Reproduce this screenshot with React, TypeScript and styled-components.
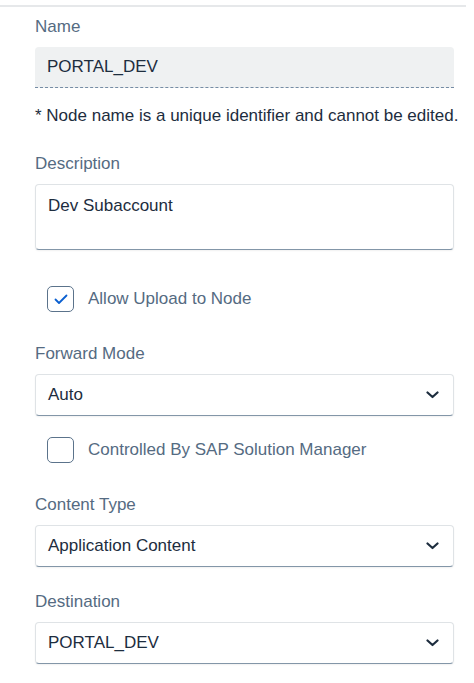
import React from 'react'
import styled, { createGlobalStyle } from 'styled-components'

const GlobalStyle = createGlobalStyle`
  html, body {
    margin: 0;
    padding: 0;
    background: #fff;
  }
  body {
    font-family: "Liberation Sans", Arial, sans-serif;
    font-size: 17px;
  }
`

const Page = styled.div`
  width: 474px;
  min-height: 683px;
  background: #fff;
  overflow: hidden;
`

const TopRule = styled.div`
  margin-top: 5px;
  width: 466px;
  height: 2px;
  background: #e6e8ea;
`

const Form = styled.div`
  display: flex;
  flex-direction: column;
  padding-left: 35px;
  width: 419px;
`

const Label = styled.div<{ $top: number }>`
  margin-top: ${(p) => p.$top}px;
  margin-bottom: 10px;
  line-height: 20px;
  color: #556b82;
`

const ReadOnly = styled.div`
  height: 40px;
  display: flex;
  align-items: center;
  padding: 0 12px;
  background: #eff1f2;
  border-radius: 4px 4px 0 0;
  border-bottom: 1px dashed #758ca4;
  color: #1d2d3e;
`

const Note = styled.div`
  margin-top: 18px;
  line-height: 20px;
  color: #1d2d3e;
  white-space: nowrap;
`

const TextArea = styled.div`
  box-sizing: border-box;
  height: 66px;
  padding: 11px 12px;
  line-height: 20px;
  border: 1px solid #dfe3e6;
  border-bottom-color: #8396a8;
  border-radius: 4px;
  box-shadow: 0 1px 2px rgba(0, 0, 0, 0.06);
  color: #1d2d3e;
`

const CheckRow = styled.label<{ $top: number }>`
  display: flex;
  align-items: center;
  gap: 14px;
  margin-top: ${(p) => p.$top}px;
  padding-left: 12px;
  color: #556b82;
  line-height: 20px;
`

const Box = styled.span`
  box-sizing: border-box;
  width: 27px;
  height: 26px;
  display: flex;
  align-items: center;
  justify-content: center;
  border: 1px solid #5b738b;
  border-radius: 5px;
  background: #fff;
`

const Select = styled.div`
  box-sizing: border-box;
  height: 42px;
  display: flex;
  align-items: center;
  justify-content: space-between;
  padding: 0 14px 0 12px;
  border: 1px solid #dfe3e6;
  border-bottom-color: #8396a8;
  border-radius: 4px;
  box-shadow: 0 1px 2px rgba(0, 0, 0, 0.06);
  color: #1d2d3e;
`

const Chevron = () => (
  <svg width="13" height="8" viewBox="0 0 13 8">
    <path d="M1.5 1.5 L6.5 6 L11.5 1.5" fill="none" stroke="#1d2d3e" strokeWidth="2.2" strokeLinecap="round" strokeLinejoin="round" />
  </svg>
)

const Check = () => (
  <svg width="14" height="11" viewBox="0 0 14 11">
    <path d="M1.5 5.5 L5 9 L12.5 1.5" fill="none" stroke="#0a5fd0" strokeWidth="1.8" strokeLinecap="round" strokeLinejoin="round" />
  </svg>
)

const Checkbox = ({ checked, label, top }: { checked?: boolean; label: string; top: number }) => (
  <CheckRow $top={top}>
    <Box>{checked && <Check />}</Box>
    {label}
  </CheckRow>
)

const Dropdown = ({ value }: { value: string }) => (
  <Select>
    <span>{value}</span>
    <Chevron />
  </Select>
)

export default function App() {
  return (
    <Page>
      <GlobalStyle />
      <TopRule />
      <Form>
        <Label $top={10}>Name</Label>
        <ReadOnly>PORTAL_DEV</ReadOnly>
        <Note>* Node name is a unique identifier and cannot be edited.</Note>

        <Label $top={28}>Description</Label>
        <TextArea>Dev Subaccount</TextArea>

        <Checkbox checked label="Allow Upload to Node" top={36} />

        <Label $top={32}>Forward Mode</Label>
        <Dropdown value="Auto" />

        <Checkbox label="Controlled By SAP Solution Manager" top={21} />

        <Label $top={32}>Content Type</Label>
        <Dropdown value="Application Content" />

        <Label $top={25}>Destination</Label>
        <Dropdown value="PORTAL_DEV" />
      </Form>
    </Page>
  )
}
